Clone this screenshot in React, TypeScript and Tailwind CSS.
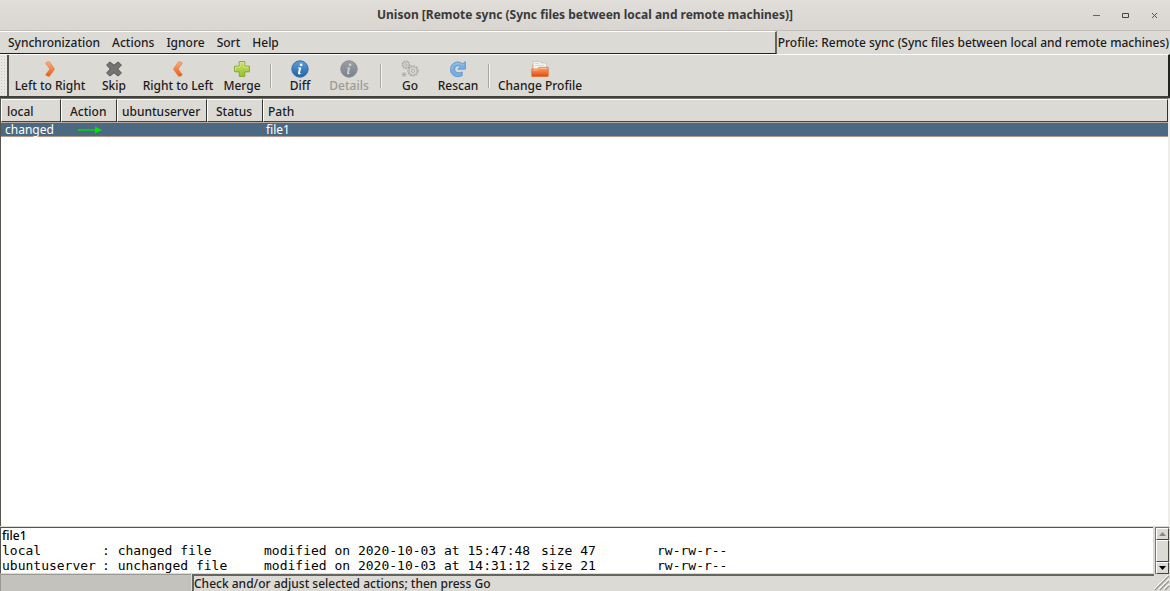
import type { ReactNode } from "react";

const menus = ["Synchronization", "Actions", "Ignore", "Sort", "Help"];

function ChevronIcon({ flip = false, id }: { flip?: boolean; id: string }) {
  return (
    <svg width="16" height="16" viewBox="0 0 16 16" aria-hidden="true">
      <defs>
        <linearGradient id={id} x1="0" y1="0" x2="0" y2="1">
          <stop offset="0" stopColor="#f7b080" />
          <stop offset="0.5" stopColor="#f58345" />
          <stop offset="1" stopColor="#ee5a14" />
        </linearGradient>
      </defs>
      <g transform={flip ? "matrix(-1 0 0 1 16 0)" : undefined}>
        <path
          d="M4.1 1.6 6.6.6Q7.3.4 7.7 1L12.2 7.3Q12.6 8 12.2 8.7L7.7 15Q7.3 15.6 6.6 15.4L4.1 14.4Q3.5 14 3.9 13.3L7.9 8 3.9 2.7Q3.5 2 4.1 1.6Z"
          fill={`url(#${id})`}
          stroke="#e3713a"
          strokeWidth="0.5"
        />
      </g>
    </svg>
  );
}

function SkipIcon() {
  return (
    <svg width="16" height="16" viewBox="0 0 16 16" aria-hidden="true">
      <path
        d="M3.8.9 8 4.2 12.2.9 15.4 4.1 11.7 8l3.7 3.9-3.2 3.2L8 11.8l-4.2 3.3L.6 11.9 4.3 8 .6 4.1Z"
        fill="#737471"
        stroke="#555653"
        strokeWidth="1"
        strokeLinejoin="round"
      />
    </svg>
  );
}

function PlusIcon() {
  return (
    <svg width="16" height="16" viewBox="0 0 16 16" aria-hidden="true">
      <defs>
        <linearGradient id="plus" x1="0" y1="0" x2="0" y2="1">
          <stop offset="0" stopColor="#c9e06a" />
          <stop offset="1" stopColor="#98c22e" />
        </linearGradient>
      </defs>
      <path
        d="M5.2.6h5.6v4.6h4.6v5.6h-4.6v4.6H5.2v-4.6H.6V5.2h4.6Z"
        fill="url(#plus)"
        stroke="#85a832"
        strokeWidth="1"
        strokeLinejoin="round"
      />
      <path d="M14.4 6.2H9.8V1.6H6.2v4.6H1.6V9.6" fill="none" stroke="#dcea9c" strokeWidth="0.8" />
    </svg>
  );
}

function InfoIcon({ muted = false, id }: { muted?: boolean; id: string }) {
  return (
    <svg width="18" height="18" viewBox="0 0 18 18" aria-hidden="true">
      <defs>
        <linearGradient id={id} x1="0" y1="0" x2="0" y2="1">
          <stop offset="0" stopColor={muted ? "#9a9fa3" : "#5d9fd8"} />
          <stop offset="1" stopColor={muted ? "#79818a" : "#2561a4"} />
        </linearGradient>
      </defs>
      <circle cx="9" cy="9" r="8.2" fill={`url(#${id})`} stroke={muted ? "#868c93" : "#3370a9"} />
      <g fill={muted ? "#cbcdce" : "#fff"}>
        <circle cx="10.1" cy="4.8" r="1.4" />
        <path d="M7 7.4h3.3L9 12.6q-.1.7.5.6l.9-.3-.1.7Q9.3 14.5 8 14.4q-1.3-.1-1-1.6l1-4.3-1.2-.2Z" />
      </g>
    </svg>
  );
}

function GearsIcon() {
  return (
    <svg width="18" height="18" viewBox="0 0 18 18" aria-hidden="true" fill="none" stroke="#a8a9a6">
      <circle cx="5" cy="4.8" r="3.8" strokeWidth="1.2" strokeDasharray="1.6 .9" />
      <circle cx="5" cy="4.8" r="3" strokeWidth="0.7" />
      <circle cx="5" cy="4.8" r="1.2" strokeWidth="0.8" />
      <circle cx="12" cy="10.8" r="5" strokeWidth="1.3" strokeDasharray="2 .9" />
      <circle cx="12" cy="10.8" r="4" strokeWidth="0.7" />
      <circle cx="12" cy="10.8" r="1.7" strokeWidth="0.9" />
      <path d="M1 12.5 5 16.5M5 12.5 1 16.5M3 12v5M1 14.5h4.5" strokeWidth="0.8" />
    </svg>
  );
}

function RescanIcon() {
  return (
    <svg width="18" height="18" viewBox="0 0 18 18" aria-hidden="true">
      <path
        d="M16.4 1.6v7.6H8.8l2.5-2.7C8.7 5 5.8 6.2 5.8 9.3c0 3.3 3.3 4.3 7.4 2.6v3.9C6.7 18.2 1.5 15.3 1.5 9.4 1.5 3 8.6-.5 13.6 3.8Z"
        fill="#79addd"
        stroke="#5b94ca"
        strokeWidth="0.8"
        strokeLinejoin="round"
      />
      <path d="M2.8 9C3 4.2 9 1.7 13.6 5.4l1.2-1.2" fill="none" stroke="#a4caed" strokeWidth="0.9" />
    </svg>
  );
}

function FolderIcon() {
  return (
    <svg width="18" height="18" viewBox="0 0 18 18" aria-hidden="true">
      <defs>
        <linearGradient id="folder" x1="0" y1="0" x2="0" y2="1">
          <stop offset="0" stopColor="#f9a878" />
          <stop offset="0.5" stopColor="#f3763a" />
          <stop offset="1" stopColor="#e24a0c" />
        </linearGradient>
      </defs>
      <path d="M1.5 9V4.5h1V9Z" fill="#d98a60" />
      <path d="M2.2 1.5h6l2 1.5h5.4v7H2.2Z" fill="#f5f5f2" stroke="#bdbdb8" strokeWidth="0.7" />
      <path d="M4 3.5h4M4 5.4h9.5" stroke="#c7c7c3" strokeWidth="0.7" />
      <path d="M.8 9h5.4L8 7.4h9.2v9H.8Z" fill="url(#folder)" stroke="#de6328" strokeWidth="0.7" />
      <path d="M1.6 10h5L8.4 8.3h8" fill="none" stroke="#ffc9a5" strokeWidth="0.8" />
    </svg>
  );
}

function ToolButton({
  label,
  width,
  disabled = false,
  children,
}: {
  label: string;
  width: string;
  disabled?: boolean;
  children: ReactNode;
}) {
  return (
    <button
      type="button"
      disabled={disabled}
      className={`flex shrink-0 flex-col items-center whitespace-nowrap disabled:text-[#9a9b96] ${width}`}
    >
      <span className="flex h-[18px] items-center justify-center">{children}</span>
      <span className="leading-[15px]">{label}</span>
    </button>
  );
}

function Separator() {
  return (
    <div className="flex w-3 shrink-0 justify-center pt-1 pb-2">
      <div className="w-[2px] border-l border-r border-l-[#a8a8a1] border-r-[#f3f3f0]" />
    </div>
  );
}

function ScrollButton({ label, up = false }: { label: string; up?: boolean }) {
  return (
    <button
      type="button"
      aria-label={label}
      className="flex h-3 w-full items-center justify-center border border-b-[#44443f] border-l-white border-r-[#44443f] border-t-white bg-[#dcdad5]"
    >
      <svg width="7" height="4" viewBox="0 0 7 4" aria-hidden="true">
        <path d={up ? "M0 4h7L3.5 0Z" : "M0 0h7L3.5 4Z"} fill={up ? "#888883" : "#000"} />
      </svg>
    </button>
  );
}

const columns = [
  { name: "local", width: "w-[60px]", pad: "pl-[5px]" },
  { name: "Action", width: "w-14", pad: "pl-2" },
  { name: "ubuntuserver", width: "w-[90px]", pad: "pl-1" },
  { name: "Status", width: "w-14", pad: "pl-2" },
  { name: "Path", width: "", pad: "pl-1" },
];

const replicas = [
  { root: "local", state: ": changed file", date: "modified on 2020-10-03 at 15:47:48", size: "size 47" },
  { root: "ubuntuserver", state: ": unchanged file", date: "modified on 2020-10-03 at 14:31:12", size: "size 21" },
];

export default function App() {
  return (
    <div className="flex h-screen flex-col overflow-hidden bg-[#dcdad5] font-['Noto_Sans','Open_Sans',sans-serif] text-[12px] leading-4 font-medium text-[#1c1c1c]">
      <header className="flex h-[31px] shrink-0 items-center border-b border-[#c2bdb8] bg-linear-to-b from-[#e1deda] to-[#d9d5d1] text-[#3a3a3a]">
        <div className="w-[88px]" />
        <h1 className="flex-1 text-center text-[12px] font-bold whitespace-nowrap">
          Unison [Remote sync (Sync files between local and remote machines)]
        </h1>
        <div className="flex w-[88px] items-center">
          <button type="button" aria-label="Minimize" className="flex w-[29px] justify-center">
            <svg width="9" height="9" viewBox="0 0 9 9" aria-hidden="true">
              <path d="M1 4.5h7" stroke="#666" />
            </svg>
          </button>
          <button type="button" aria-label="Maximize" className="flex w-[29px] justify-center">
            <svg width="9" height="9" viewBox="0 0 9 9" aria-hidden="true">
              <path d="M1.5 2.5h6v4h-6Z" fill="none" stroke="#444" />
            </svg>
          </button>
          <button type="button" aria-label="Close" className="flex w-[29px] justify-center">
            <svg width="9" height="9" viewBox="0 0 9 9" aria-hidden="true">
              <path d="m2 2 5 5m0-5L2 7" stroke="#555" />
            </svg>
          </button>
        </div>
      </header>

      <div className="flex h-[23px] shrink-0">
        <nav className="flex flex-1 items-center gap-3 border-b border-r-2 border-t border-b-[#22221f] border-r-[#66665f] border-t-white pl-2">
          {menus.map((m) => (
            <button key={m} type="button">
              {m}
            </button>
          ))}
        </nav>
        <div className="flex shrink-0 items-center px-px whitespace-nowrap">
          Profile: Remote sync (Sync files between local and remote machines)
        </div>
      </div>

      <div className="flex h-11 shrink-0 border-b-2 border-r-2 border-t border-b-[#3f3f3b] border-r-[#22221f] border-t-white">
        <div className="w-[9px] shrink-0 border-r-2 border-r-[#55554f] bg-[radial-gradient(#c8c6c0_1px,#e8e7e3_1px)] bg-size-[3px_3px]" />
        <div role="toolbar" aria-label="Actions" className="flex flex-1 pt-[5px]">
          <ToolButton label="Left to Right" width="w-[82px]">
            <ChevronIcon id="chevron-right" />
          </ToolButton>
          <ToolButton label="Skip" width="w-[46px]">
            <SkipIcon />
          </ToolButton>
          <ToolButton label="Right to Left" width="w-[82px]">
            <ChevronIcon id="chevron-left" flip />
          </ToolButton>
          <ToolButton label="Merge" width="w-[46px]">
            <PlusIcon />
          </ToolButton>
          <Separator />
          <ToolButton label="Diff" width="w-[46px]">
            <InfoIcon id="info" />
          </ToolButton>
          <ToolButton label="Details" width="w-[52px]" disabled>
            <InfoIcon id="info-muted" muted />
          </ToolButton>
          <Separator />
          <ToolButton label="Go" width="w-[46px]">
            <GearsIcon />
          </ToolButton>
          <ToolButton label="Rescan" width="w-[50px]">
            <RescanIcon />
          </ToolButton>
          <Separator />
          <ToolButton label="Change Profile" width="w-[90px]">
            <FolderIcon />
          </ToolButton>
        </div>
      </div>

      <main className="min-h-0 flex-1 border-l border-r-2 border-t border-l-[#55554f] border-r-[#eeede9] border-t-[#77776f] bg-white">
        <table className="w-full table-fixed border-separate border-spacing-0 text-left">
          <thead>
            <tr>
              {columns.map((c) => (
                <th
                  key={c.name}
                  className={`h-[23px] border-b border-r border-l border-t border-b-[#44443f] border-l-white border-r-[#33332f] border-t-white bg-[#dcdad5] p-0 pt-[2px] font-medium ${c.pad} ${c.width}`}
                >
                  {c.name}
                </th>
              ))}
            </tr>
          </thead>
          <tbody>
            <tr className="bg-[#4b6983] leading-[13px] text-white">
              <td className="border-b border-t border-b-[#b09a8c] border-t-[#b8aaa0] p-0 pl-1 font-normal">changed</td>
              <td className="border-b border-t border-b-[#b09a8c] border-t-[#b8aaa0] p-0 pl-[17px]">
                <svg width="24" height="8" viewBox="0 0 24 8" role="img" aria-label="Left to right">
                  <path d="M0 4h20" stroke="#00d800" strokeWidth="1.6" />
                  <path d="M17 .5 24 4l-7 3.5Z" fill="#00e400" />
                </svg>
              </td>
              <td className="border-b border-t border-b-[#b09a8c] border-t-[#b8aaa0] p-0" />
              <td className="border-b border-t border-b-[#b09a8c] border-t-[#b8aaa0] p-0" />
              <td className="border-b border-t border-b-[#b09a8c] border-t-[#b8aaa0] p-0 pl-[3px] font-normal">file1</td>
            </tr>
          </tbody>
        </table>
      </main>

      <section aria-label="Details" className="flex h-12 shrink-0 border-t border-[#dcdad5]">
        <div className="min-w-0 flex-1 overflow-hidden border-b border-l border-t border-b-[#dcdad5] border-l-[#55554f] border-t-[#55554f] bg-white pl-px leading-[15px] text-black">
          <p>file1</p>
          {replicas.map((r) => (
            <div
              key={r.root}
              className="grid grid-cols-[100px_162px_277px_116px_auto] font-['DejaVu_Sans_Mono',monospace] text-[13px] font-normal whitespace-nowrap"
            >
              <span>{r.root}</span>
              <span>{r.state}</span>
              <span>{r.date}</span>
              <span>{r.size}</span>
              <span>rw-rw-r--</span>
            </div>
          ))}
        </div>
        <div className="flex w-[17px] shrink-0 justify-end pr-px">
          <div className="flex w-[14px] flex-col border-l border-t border-[#77776f]">
            <ScrollButton label="Scroll up" up />
            <div className="flex-1 border border-b-[#44443f] border-l-white border-r-[#44443f] border-t-white" />
            <ScrollButton label="Scroll down" />
          </div>
        </div>
      </section>

      <footer className="flex h-[17px] shrink-0">
        <div className="w-[191px] border-l border-t border-[#9a9993] bg-[#c4c2bd]" />
        <div className="ml-px flex flex-1 items-center border-l-2 border-t-2 border-[#66665f] leading-[15px] whitespace-nowrap">
          Check and/or adjust selected actions; then press Go
        </div>
        <svg width="16" height="17" viewBox="0 0 16 17" aria-hidden="true">
          <path d="M1 16 15 2M6 16l9-9M11 16l4-4" stroke="#96958f" strokeWidth="1.2" />
          <path d="M0 15 14 1M5 15 15 5M10 15l5-5" stroke="#fff" strokeWidth="1" />
        </svg>
      </footer>
    </div>
  );
}
